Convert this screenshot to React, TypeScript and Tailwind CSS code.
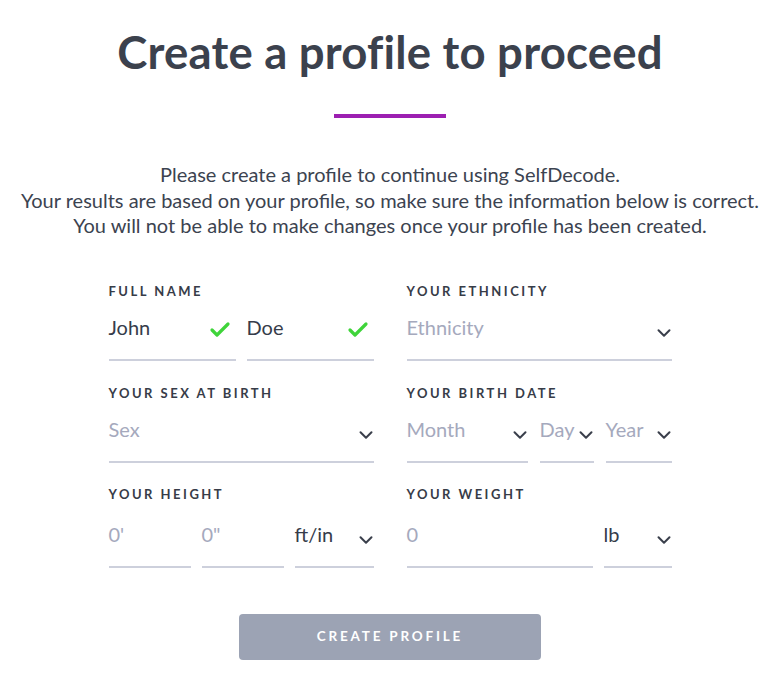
import React from "react";
import { ChevronDown, Check } from "lucide-react";

const font = { fontFamily: "Lato, 'Open Sans', sans-serif" };

function Label({ children }: { children: React.ReactNode }) {
  return (
    <div className="text-[13px] font-bold tracking-[2.5px] uppercase text-[#373c48] leading-4">
      {children}
    </div>
  );
}

function Field({
  className = "",
  value,
  placeholder,
  chevron,
  check,
}: {
  className?: string;
  value?: string;
  placeholder?: string;
  chevron?: boolean;
  check?: boolean;
}) {
  return (
    <div className={`flex items-start pt-[10px] h-[56px] border-b-2 border-[#cdd0dc] ${className}`}>
      <span
        className={`flex-1 text-[20px] leading-6 ${value ? "text-[#363c4a]" : "text-[#a5a9bd]"} whitespace-nowrap`}
      >
        {value ?? placeholder}
      </span>
      {check && <Check size={24} strokeWidth={3.2} className="text-[#3fd43a] mr-1 mt-[3px]" />}
      {chevron && <ChevronDown size={22} strokeWidth={2.2} className="text-[#3a3f4b] mr-[-3px] mt-[7px]" />}
    </div>
  );
}

export default function App() {
  return (
    <div className="w-[780px] min-h-[683px] bg-white flex flex-col items-center" style={font}>
      <h1 className="mt-[26px] text-[45.5px] leading-[52px] font-bold text-[#3b414d] tracking-[0.2px]">
        Create a profile to proceed
      </h1>
      <div className="mt-[36px] w-[112px] h-[4px] bg-[#9c1fb1]" />
      <p className="mt-[44px] text-center text-[20px] leading-[25.5px] text-[#3c4350]">
        Please create a profile to continue using SelfDecode.
        <br />
        Your results are based on your profile, so make sure the information below is correct.
        <br />
        You will not be able to make changes once your profile has been created.
      </p>

      <div className="mt-[44px] w-[563px] grid grid-cols-2 gap-x-[33px]">
        <div>
          <Label>Full name</Label>
          <div className="mt-[6px] flex gap-[11px]">
            <Field className="flex-1" value="John" check />
            <Field className="flex-1" value="Doe" check />
          </div>
        </div>
        <div>
          <Label>Your ethnicity</Label>
          <div className="mt-[6px] flex">
            <Field className="flex-1" placeholder="Ethnicity" chevron />
          </div>
        </div>

        <div className="mt-[24px]">
          <Label>Your sex at birth</Label>
          <div className="mt-[6px] flex">
            <Field className="flex-1" placeholder="Sex" chevron />
          </div>
        </div>
        <div className="mt-[24px]">
          <Label>Your birth date</Label>
          <div className="mt-[6px] flex gap-[12px]">
            <Field className="w-[121px]" placeholder="Month" chevron />
            <Field className="w-[54px]" placeholder="Day" chevron />
            <Field className="flex-1" placeholder="Year" chevron />
          </div>
        </div>

        <div className="mt-[23px]">
          <Label>Your height</Label>
          <div className="mt-[10px] flex gap-[11px]">
            <Field className="w-[82px]" placeholder="0'" />
            <Field className="w-[82px]" placeholder={'0"'} />
            <Field className="flex-1" value="ft/in" chevron />
          </div>
        </div>
        <div className="mt-[23px]">
          <Label>Your weight</Label>
          <div className="mt-[10px] flex gap-[11px]">
            <Field className="w-[186px]" placeholder="0" />
            <Field className="flex-1" value="lb" chevron />
          </div>
        </div>
      </div>

      <button className="mt-[46px] w-[302px] h-[46px] rounded-[4px] bg-[#9ca3b4] text-white text-[13.5px] font-bold tracking-[2.8px] uppercase">
        Create profile
      </button>
    </div>
  );
}
